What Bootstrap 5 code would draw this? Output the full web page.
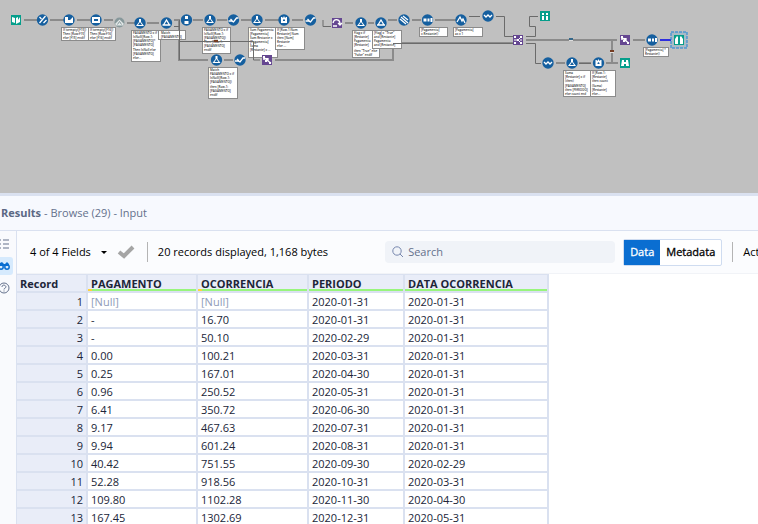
<!DOCTYPE html>
<html lang="en">
<head>
<meta charset="utf-8">
<meta name="viewport" content="width=device-width, initial-scale=1">
<title>Results - Browse (29) - Input</title>
<link href="https://cdn.jsdelivr.net/npm/bootstrap@5.3.0/dist/css/bootstrap.min.css" rel="stylesheet">
<style>
body{font-family:"Open Sans","Noto Sans",sans-serif;font-size:11px;line-height:18px;color:#000;background:#fff}
.canvas-area{background:#c0c0c0}
.canvas-area svg{display:block}
.wire{fill:none;stroke:#8b8b8b;stroke-width:2}
.wire-thin{fill:none;stroke:#6b6b6b;stroke-width:1}
.note rect{fill:#fff;stroke:#8b8b8b;stroke-width:1}
.note text{font-family:"Open Sans",sans-serif;font-size:3px;font-weight:600;fill:#333}
.glyph{fill:none;stroke:#fff;stroke-width:1.3}
.results{border-top:3px solid #dae1f0;background:#f7f9fe}
.results-title{height:35px;padding-left:1px;color:#64718c;border-bottom:1px solid #dae1f0}
.results-title h1{font-size:11px;color:#5b6884}
.results-title span{margin-left:3px}
.rail{width:16px;background:#f9fafd}
.rail button{height:18px;width:13px;margin-top:4px;padding:0;border:0;background:none;display:flex;align-items:center}
.rail button.on{background:#d6eafd;border-radius:0 3px 3px 0}
.body-pane{min-width:0;border-left:1px solid #dae1f0;background:#fff}
.tools{height:43px;background:#fbfcfe;border-bottom:1px solid #f1f3f7;white-space:nowrap;padding-left:13px}
.tools button{font-size:11px;line-height:18px;padding:0;border:0;background:none;color:#000}
.caret-down{border:3px solid transparent;border-top-color:#000;border-bottom:0;margin-left:10px}
.rule{width:1px;height:20px;background:#b4b4b4;margin:0 10px}
.find{height:22px;flex:0 0 230px;background:#f0f3f8;border-radius:4px;padding-left:7px;margin-left:57px}
.find input{border:0;background:none;outline:0;min-width:0;font-size:11px;padding:0;color:#64718c}
.find input::placeholder{color:#64718c;opacity:1}
.tools .seg{height:27px;margin-left:8px;border:1px solid #cfdcf0;border-radius:2px;background:#fff}
.tools .seg button{padding:0 6px;-webkit-text-stroke:.3px}
.tools .seg .on{background:#0a6ed1;color:#fff}
.grid-data{border-collapse:separate;border-spacing:0;table-layout:fixed;width:532px;line-height:14px;color:#202538;border-top:1px solid #dae1f0}
.grid-data th,.grid-data td{height:18px;padding:1px 3px 0;border-right:2px solid #dae1f0;border-bottom:2px solid #dae1f0;white-space:nowrap}
.grid-data thead th{background:#e9edf8;font-weight:700}
.grid-data thead th+th{background:linear-gradient(#98f57c,#98f57c) bottom/100% 2px no-repeat #e9edf8}
.grid-data thead th.has-null{background:linear-gradient(90deg,#ffd23c 4px,#98f57c 4px) bottom/100% 2px no-repeat #e9edf8}
.grid-data tbody th{background:#e9edf8;font-weight:400;text-align:right}
.grid-data td.none{color:#8e9ab8}
</style>
<script src="https://cdn.jsdelivr.net/npm/bootstrap@5.3.0/dist/js/bootstrap.bundle.min.js"></script>
</head>
<body class="vh-100 d-flex flex-column overflow-hidden">
<section class="canvas-area flex-shrink-0 overflow-hidden" aria-label="Workflow canvas">
<svg width="758" height="193" viewBox="0 0 758 193">
<defs>
<circle id="c" r="5.7" fill="#155f9f"/>
<rect id="p" x="-5" y="-5" width="10" height="10" fill="#654791"/>
<rect id="t" x="-5" y="-5" width="10" height="10" fill="#059e8b"/>
<g id="formula"><use href="#c"/><path d="M-1-4H1V-1L4 3H-4L-1-1Z" fill="#fff"/><path d="M0-1L2 2H-2Z" fill="#155f9f"/></g>
<g id="wave"><use href="#c"/><path class="glyph" d="M-5 1H-2L0 2 3-2H5M-3-1L-1 1"/></g>
<g id="select"><use href="#c"/><path d="M-4-1.500H-1V1.500H-4ZM0-1.500H2V1.500H0ZM3-2H5V2H3Z" fill="#fff"/></g>
<g id="crown"><use href="#c"/><path d="M-3-3H-2L-1-2 0-4 1-2 2-3H3V3H-3Z" fill="#fff"/><path d="M-1 0L0-1 1 0V1H-1Z" fill="#155f9f"/></g>
<g id="multi"><use href="#c"/><path class="glyph" d="M-4 2H4M-3 2L0-3 3 2"/></g>
<g id="join"><use href="#p"/><path d="M-4-4H-2V-2H-4ZM-1-2H1V0H-1ZM-2 0H0V2H-2ZM2 2H4V4H2Z" fill="#fff"/><path class="glyph" d="M-4-3L-1-1 1 1 4 3M1-2V1M-4-1H-2"/></g>
</defs>
<g class="wire">
<path d="M24 20H37M50 20H64M77 20H90M104 20H113M127 23H135M147 23H159M174 20H179V60H208M193 20H203M217 20H227M241 20H251M265 20H279M292 20H303M345 23H353M368 23H374M388 20H397M412 20H421M435 20H456M224 60H233M275 60H393V43H513M526 40H617M612 40V63M606 63H618M556 63H565M579 63H591M633 40H645"/>
</g>
<g class="note">
<rect x="61.500" y="27.500" width="27" height="13"/><text><tspan x="63" y="31">If isempty([F15])</tspan><tspan x="63" y="35">Then [Row:F15]</tspan><tspan x="63" y="39">else [F15] endif</tspan></text>
<rect x="88.500" y="27.500" width="27" height="13"/><text><tspan x="90" y="31">If isempty([F16])</tspan><tspan x="90" y="35">Then [Row:F16]</tspan><tspan x="90" y="39">else [F16] endif</tspan></text>
<rect x="131.500" y="30.500" width="29" height="31"/><text><tspan x="133" y="34">PAGAMENTO = if</tspan><tspan x="133" y="38">IsNull([Row-1:</tspan><tspan x="133" y="42">[PAGAMENTO]*</tspan><tspan x="133" y="46">[PAGAMENTO]</tspan><tspan x="133" y="51">Then IsNull else</tspan><tspan x="133" y="55">[PAGAMENTO]</tspan><tspan x="133" y="59">else...</tspan></text>
<rect x="158.500" y="30.500" width="27" height="9"/><text><tspan x="161" y="34">Match</tspan><tspan x="161" y="38">[PAGAMENTO]</tspan></text>
<rect x="202.500" y="27.500" width="28" height="26"/><text><tspan x="204" y="31">PAGAMENTO = if</tspan><tspan x="204" y="35">IsNull([Row-1:</tspan><tspan x="204" y="39">[PAGAMENTO])</tspan><tspan x="204" y="43">Then [Row-1:</tspan><tspan x="204" y="47">[PAGAMENTO]</tspan><tspan x="204" y="51">endif</tspan></text>
<rect x="208.500" y="67.500" width="29" height="31"/><text><tspan x="210" y="71">Match</tspan><tspan x="210" y="75">PAGAMENTO = if</tspan><tspan x="210" y="79">IsNull([Row-1:</tspan><tspan x="210" y="83">[PAGAMENTO])</tspan><tspan x="210" y="88">then [Row-1:</tspan><tspan x="210" y="92">[PAGAMENTO]</tspan><tspan x="210" y="96">endif</tspan></text>
<rect x="248.500" y="27.500" width="29" height="30"/><text><tspan x="250" y="31">Sum Pagamento</tspan><tspan x="250" y="35">[Pagamento]</tspan><tspan x="250" y="39">Sum Restante =</tspan><tspan x="250" y="43">[Pagamento]</tspan><tspan x="250" y="47">Soma</tspan><tspan x="250" y="51">[Restante] = ...</tspan></text>
<rect x="275.500" y="27.500" width="29" height="22"/><text><tspan x="277" y="31">If [Row-1:Num</tspan><tspan x="277" y="35">Restante] Num</tspan><tspan x="277" y="39">then [Num]</tspan><tspan x="277" y="43">Restante</tspan><tspan x="277" y="47">else ...</tspan></text>
<rect x="352.500" y="30.500" width="27" height="27"/><text><tspan x="354" y="34">Flag = if</tspan><tspan x="354" y="38">[Restante]</tspan><tspan x="354" y="42">Pagamento</tspan><tspan x="354" y="46">[Restante]</tspan><tspan x="354" y="52">then "True" else</tspan><tspan x="354" y="56">"False" endif</tspan></text>
<rect x="372.500" y="30.500" width="29" height="18"/><text><tspan x="374" y="34">[Flag] = "True"</tspan><tspan x="374" y="38">and [Restante]</tspan><tspan x="374" y="42">Pagamento</tspan><tspan x="374" y="46">and [Restante]</tspan></text>
<rect x="419.500" y="27.500" width="28" height="9"/><text><tspan x="421" y="31">[Pagamento]</tspan><tspan x="421" y="35">= Restante()</tspan></text>
<rect x="453.500" y="27.500" width="29" height="9"/><text><tspan x="455" y="31">[Pagamento]</tspan><tspan x="455" y="35">as = 1</tspan></text>
<rect x="563.500" y="70.500" width="27" height="26"/><text><tspan x="565" y="74">Soma</tspan><tspan x="565" y="78">[Restante] = if</tspan><tspan x="565" y="82">(then)</tspan><tspan x="565" y="87">[PAGAMENTO]</tspan><tspan x="565" y="91">then [PERIODO]</tspan><tspan x="565" y="95">else count end</tspan></text>
<rect x="590.500" y="70.500" width="25" height="26"/><text><tspan x="592" y="74">If [Row-1:</tspan><tspan x="592" y="78">[Restante]</tspan><tspan x="592" y="82">then count</tspan><tspan x="592" y="87">(Soma)</tspan><tspan x="592" y="91">[Restante]</tspan><tspan x="592" y="95">else...</tspan></text>
<rect x="643.500" y="47.500" width="25" height="9"/><text><tspan x="645" y="51">[Pagamento] *</tspan><tspan x="645" y="55">Restante()</tspan></text>
</g>
<path class="wire-thin" d="M174 26.500H179M179.500 20V60M179 41.500H253.500V60H260M323 20V26.500H331M469 16.500H480M496 16.500H504.500V36.500H513M526 36.500H535.500V26.500H529.500V16.500H538M393 43.500H513M526 43.500H535.500V63.500H541M579 63.500H591"/>
<path d="M660 40H672" stroke="#2d2dde" stroke-width="2"/>
<g><path d="M214 40.500H218M610 51.500H614M569 39.500H573" stroke="#ddd" stroke-width="3"/><path d="M214 41H218M610 51H614" stroke="#753c22" stroke-width="2"/><path d="M569 39H573" stroke="#35688a" stroke-width="2"/></g>
<g transform="translate(16 20)"><use href="#t"/><path d="M-4-3L-1-2V3L-4 2ZM0-2L2-3V0L4-3V2L0 4Z" fill="#fff"/></g>
<g transform="translate(42.500 20)"><use href="#c"/><path class="glyph" d="M-3-3L-1-1M-3 3L3-4M1 3L4 0"/></g>
<g transform="translate(69 20)"><use href="#c"/><path d="M-4-3H-1V0H1L4-3V3H-4Z" fill="#fff"/></g>
<g transform="translate(96 20)"><use href="#c"/><path d="M-4-3H4V3H-4Z" fill="#fff"/><path d="M-2 0H2" stroke="#155f9f" stroke-width="2"/></g>
<g transform="translate(119.500 22.500)"><circle r="5" fill="#87989b"/><path d="M-4 1L0-3 4 1V3H-4Z" fill="#e1e7e7"/><path d="M-2 2L0-1 2 2" stroke="#87989b" fill="none"/></g>
<use href="#formula" x="140" y="23"/><use href="#multi" x="166.500" y="23"/>
<g transform="translate(186.500 20)"><use href="#c"/><path d="M-1.500-4H1.500V-1H-1.500ZM-2 1H2V4H-2Z" fill="#fff"/></g>
<use href="#formula" x="210" y="20"/><use href="#wave" x="233.500" y="20"/><use href="#formula" x="257" y="20"/><use href="#crown" x="284" y="20"/><use href="#wave" x="310.500" y="20"/>
<g transform="translate(337 23)"><use href="#p"/><path class="glyph" d="M-4 0C-3-5 3-4 3 1M1 0L3 2 5 0M-4 3H0"/></g>
<use href="#formula" x="361" y="23"/><use href="#multi" x="381" y="23"/>
<g transform="translate(404 20)"><use href="#c"/><path class="glyph" d="M-4-1L2 4M-3-3L4 3M-1-4L4 0"/></g>
<use href="#select" x="427.500" y="20"/>
<g transform="translate(461 20)"><use href="#c"/><path class="glyph" d="M-4 2L-1-3 1 1 2-1 4 3"/></g>
<g id="zig" transform="translate(488 16)"><use href="#c"/><path class="glyph" d="M-4-1L-2 1 0-1 2 1 4-1"/></g>
<use href="#formula" x="216.500" y="60"/><use href="#wave" x="240" y="60"/><use href="#join" x="267" y="60"/>
<g transform="translate(518 40)"><use href="#p"/><path d="M-4-4H-2V-2H-4ZM2-4H4V-2H2ZM-4 2H-2V4H-4ZM2 2H4V4H2ZM-1-1H1V1H-1Z" fill="#fff"/><path d="M-4 0H0L3-3M0 0L3 3M2 0H4" fill="none" stroke="#fff"/></g>
<g transform="translate(545 16)"><use href="#t"/><path d="M-3-3H-1V-1H-3ZM1-3H3V-1H1ZM-3 0H-1V4H-3ZM1 0H3V4H1Z" fill="#fff"/></g>
<use href="#zig" x="60" y="47"/><use href="#formula" x="572" y="63"/><use href="#crown" x="598.500" y="63"/>
<g transform="translate(625 63)"><use href="#t"/><path d="M-3-3H-1V-1H1V-3H3L4 3H1V1H-1V3H-4Z" fill="#fff"/></g>
<use href="#join" x="625" y="40"/><use href="#select" x="652" y="40"/>
<rect x="671" y="32" width="16" height="16" fill="#a9bac6" stroke="#1c83d8" stroke-dasharray="3 1"/>
<g transform="translate(679 40)"><use href="#t"/><path d="M-4 4V-1L-2-4-1-3V4ZM1 4V-3L2-4 4-1V4Z" fill="#fff"/></g>
</svg>
</section>
<main class="results flex-grow-1 d-flex flex-column overflow-hidden">
<header class="results-title flex-shrink-0 d-flex align-items-center"><h1 class="m-0 fw-bold">Results</h1><span>- Browse (29) - Input</span></header>
<div class="d-flex flex-grow-1 overflow-hidden">
<nav class="rail flex-shrink-0" aria-label="Result views">
<button type="button" aria-label="Messages"><svg width="10" height="12" viewBox="0 0 10 12"><path d="M0 2H1M0 6H1M0 10H1M3 2H9M3 6H9M3 10H9" stroke="#64718c" stroke-width="1.200"/></svg></button>
<button type="button" class="on" aria-label="Browse"><svg width="11" height="12" viewBox="0 0 11 12"><path d="M0 3L2 2 4 4H5L7 2 9 4V6H0Z" fill="#0a6ed1"/><circle cx="1" cy="7" r="2.200" fill="none" stroke="#0a6ed1" stroke-width="1.500"/><circle cx="7" cy="7" r="2.200" fill="none" stroke="#0a6ed1" stroke-width="1.500"/></svg></button>
<button type="button" aria-label="Help"><svg width="10" height="12" viewBox="0 0 10 12"><circle cx="4" cy="6" r="5" fill="none" stroke="#64718c"/><path d="M2 5C2 2 6 3 6 5 6 6 4 6 4 7.500M4 8.500V9.500" fill="none" stroke="#64718c"/></svg></button>
</nav>
<div class="body-pane flex-grow-1 overflow-hidden">
<div class="tools d-flex align-items-center overflow-hidden">
<button type="button" class="flex-shrink-0 d-flex align-items-center">4 of 4 Fields<span class="caret-down"></span></button>
<svg class="flex-shrink-0 ms-2" width="22" height="16" viewBox="0 0 22 16"><path d="M4 8L9 12 18 3" fill="none" stroke="#a5a5a5" stroke-width="4"/></svg>
<span class="rule flex-shrink-0"></span>
<span class="flex-shrink-0">20 records displayed, 1,168 bytes</span>
<label class="find d-flex align-items-center"><svg class="flex-shrink-0 me-1" width="12" height="12" viewBox="0 0 12 12"><circle cx="5" cy="5" r="4.200" fill="none" stroke="#7787ae"/><path d="M8 8L11 11" stroke="#7787ae"/></svg><input class="flex-grow-1" type="search" placeholder="Search" aria-label="Search"></label>
<div class="seg d-flex flex-shrink-0" role="group" aria-label="View"><button type="button" class="on">Data</button><button type="button">Metadata</button></div>
<span class="rule flex-shrink-0"></span>
<button type="button" class="flex-shrink-0">Actions</button>
</div>
<table class="grid-data">
<colgroup><col style="width:71px"><col style="width:110px"><col style="width:111px"><col style="width:96px"><col style="width:144px"></colgroup>
<thead><tr><th scope="col">Record</th><th scope="col" class="has-null">PAGAMENTO</th><th scope="col" class="has-null">OCORRENCIA</th><th scope="col">PERIODO</th><th scope="col">DATA OCORRENCIA</th></tr></thead>
<tbody>
<tr><th scope="row">1</th><td class="none">[Null]</td><td class="none">[Null]</td><td>2020-01-31</td><td>2020-01-31</td></tr>
<tr><th scope="row">2</th><td>-</td><td>16.70</td><td>2020-01-31</td><td>2020-01-31</td></tr>
<tr><th scope="row">3</th><td>-</td><td>50.10</td><td>2020-02-29</td><td>2020-01-31</td></tr>
<tr><th scope="row">4</th><td>0.00</td><td>100.21</td><td>2020-03-31</td><td>2020-01-31</td></tr>
<tr><th scope="row">5</th><td>0.25</td><td>167.01</td><td>2020-04-30</td><td>2020-01-31</td></tr>
<tr><th scope="row">6</th><td>0.96</td><td>250.52</td><td>2020-05-31</td><td>2020-01-31</td></tr>
<tr><th scope="row">7</th><td>6.41</td><td>350.72</td><td>2020-06-30</td><td>2020-01-31</td></tr>
<tr><th scope="row">8</th><td>9.17</td><td>467.63</td><td>2020-07-31</td><td>2020-01-31</td></tr>
<tr><th scope="row">9</th><td>9.94</td><td>601.24</td><td>2020-08-31</td><td>2020-01-31</td></tr>
<tr><th scope="row">10</th><td>40.42</td><td>751.55</td><td>2020-09-30</td><td>2020-02-29</td></tr>
<tr><th scope="row">11</th><td>52.28</td><td>918.56</td><td>2020-10-31</td><td>2020-03-31</td></tr>
<tr><th scope="row">12</th><td>109.80</td><td>1102.28</td><td>2020-11-30</td><td>2020-04-30</td></tr>
<tr><th scope="row">13</th><td>167.45</td><td>1302.69</td><td>2020-12-31</td><td>2020-05-31</td></tr>
</tbody>
</table>
</div>
</div>
</main>
</body>
</html>
